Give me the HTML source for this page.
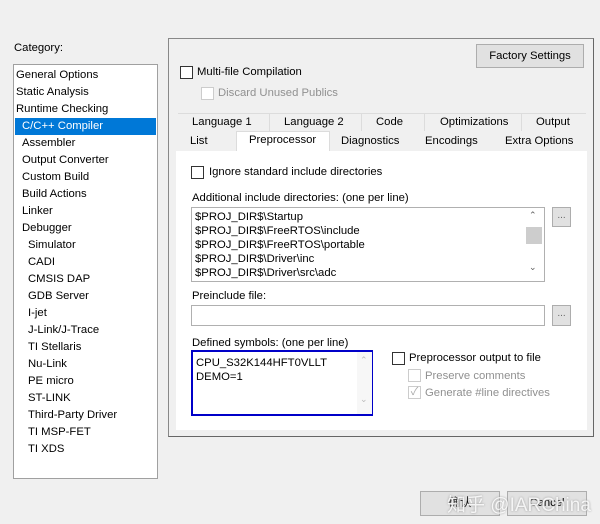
<!DOCTYPE html>
<html><head><meta charset="utf-8"><style>
*{margin:0;padding:0;box-sizing:border-box}
body{width:600px;height:524px;background:#f0f0f0;font-family:"Liberation Sans","Noto Sans CJK SC",sans-serif;font-size:11.3px;color:#000;position:relative;overflow:hidden}
.a{position:absolute;white-space:nowrap}
.cb{position:absolute;width:13px;height:13px;border:1px solid #333;background:#fff}
.cbd{border-color:#ccc}
.btn{position:absolute;background:#e1e1e1;border:1px solid #adadad;text-align:center}
.li{position:absolute;left:3px;height:17px;line-height:17px;width:139px}
</style></head><body>
<div class="a" style="left:14px;top:42px">Category:</div>
<div class="a" style="left:13px;top:64px;width:145px;height:415px;background:#fff;border:1px solid #a0a0a0">
<div class="li" style="top:2px;left:2px">General Options</div>
<div class="li" style="top:19px;left:2px">Static Analysis</div>
<div class="li" style="top:36px;left:2px">Runtime Checking</div>
<div class="li" style="top:53px;left:1px;background:#0078d7;color:#fff;padding-left:7px;width:141px">C/C++ Compiler</div>
<div class="li" style="top:70px;left:8px">Assembler</div>
<div class="li" style="top:87px;left:8px">Output Converter</div>
<div class="li" style="top:104px;left:8px">Custom Build</div>
<div class="li" style="top:121px;left:8px">Build Actions</div>
<div class="li" style="top:138px;left:8px">Linker</div>
<div class="li" style="top:155px;left:8px">Debugger</div>
<div class="li" style="top:172px;left:14px">Simulator</div>
<div class="li" style="top:189px;left:14px">CADI</div>
<div class="li" style="top:206px;left:14px">CMSIS DAP</div>
<div class="li" style="top:223px;left:14px">GDB Server</div>
<div class="li" style="top:240px;left:14px">I-jet</div>
<div class="li" style="top:257px;left:14px">J-Link/J-Trace</div>
<div class="li" style="top:274px;left:14px">TI Stellaris</div>
<div class="li" style="top:291px;left:14px">Nu-Link</div>
<div class="li" style="top:308px;left:14px">PE micro</div>
<div class="li" style="top:325px;left:14px">ST-LINK</div>
<div class="li" style="top:342px;left:14px">Third-Party Driver</div>
<div class="li" style="top:359px;left:14px">TI MSP-FET</div>
<div class="li" style="top:376px;left:14px">TI XDS</div>
</div>
<div class="a" style="left:168px;top:38px;width:426px;height:399px;border:1px solid #888;border-right-color:#666;border-bottom-color:#666"></div>
<div class="btn" style="left:476px;top:44px;width:108px;height:24px;line-height:22px">Factory Settings</div>
<div class="cb" style="left:180px;top:66px"></div>
<div class="a" style="left:197px;top:66px">Multi-file Compilation</div>
<div class="cb cbd" style="left:201px;top:87px"></div>
<div class="a" style="left:218px;top:87px;color:#909090">Discard Unused Publics</div>
<div class="a" style="left:178px;top:113px;width:408px;height:18px;border-top:1px solid #dcdcdc"></div>
<div class="a" style="left:192px;top:116px">Language 1</div>
<div class="a" style="left:284px;top:116px">Language 2</div>
<div class="a" style="left:376px;top:116px">Code</div>
<div class="a" style="left:440px;top:116px">Optimizations</div>
<div class="a" style="left:536px;top:116px">Output</div>
<div class="a" style="left:269px;top:113px;height:18px;border-left:1px solid #dcdcdc"></div>
<div class="a" style="left:361px;top:113px;height:18px;border-left:1px solid #dcdcdc"></div>
<div class="a" style="left:424px;top:113px;height:18px;border-left:1px solid #dcdcdc"></div>
<div class="a" style="left:521px;top:113px;height:18px;border-left:1px solid #dcdcdc"></div>
<div class="a" style="left:190px;top:135px">List</div>
<div class="a" style="left:236px;top:131px;width:94px;height:20px;background:#fff;border:1px solid #dcdcdc;border-bottom:none"></div>
<div class="a" style="left:249px;top:134px">Preprocessor</div>
<div class="a" style="left:341px;top:135px">Diagnostics</div>
<div class="a" style="left:425px;top:135px">Encodings</div>
<div class="a" style="left:505px;top:135px">Extra Options</div>
<div class="a" style="left:176px;top:151px;width:411px;height:279px;background:#fff"></div>
<div class="cb" style="left:191px;top:166px"></div>
<div class="a" style="left:209px;top:166px">Ignore standard include directories</div>
<div class="a" style="left:192px;top:192px">Additional include directories: (one per line)</div>
<div class="a" style="left:191px;top:207px;width:354px;height:75px;border:1px solid #b0b0b0;background:#fff;padding:2px 0 0 3px;line-height:14px">$PROJ_DIR$\Startup<br>$PROJ_DIR$\FreeRTOS\include<br>$PROJ_DIR$\FreeRTOS\portable<br>$PROJ_DIR$\Driver\inc<br>$PROJ_DIR$\Driver\src\adc</div>
<div class="a" style="left:525px;top:208px;width:17px;height:72px;background:#fff"><div style="position:absolute;left:1px;top:19px;width:16px;height:17px;background:#cdcdcd"></div><div style="position:absolute;left:4px;top:2px;font-size:9px;color:#606060">&#8963;</div><div style="position:absolute;left:4px;top:54px;font-size:9px;color:#606060">&#8964;</div></div>
<div class="btn" style="left:552px;top:207px;width:19px;height:20px;line-height:16px;font-size:10px;color:#666">...</div>
<div class="a" style="left:192px;top:290px">Preinclude file:</div>
<div class="a" style="left:191px;top:305px;width:354px;height:21px;border:1px solid #b0b0b0;background:#fff"></div>
<div class="btn" style="left:552px;top:305px;width:19px;height:21px;line-height:16px;font-size:10px;color:#666">...</div>
<div class="a" style="left:192px;top:337px">Defined symbols: (one per line)</div>
<div class="a" style="left:191px;top:350px;width:182px;height:66px;border:2px solid #0000c8;background:#fff;padding:4px 0 0 3px;line-height:14px">CPU_S32K144HFT0VLLT<br>DEMO=1</div>
<div class="a" style="left:357px;top:352px;width:15px;height:62px;background:#f7f7f7"><div style="position:absolute;left:3px;top:3px;font-size:9px;color:#bbb">&#8963;</div><div style="position:absolute;left:3px;top:42px;font-size:9px;color:#bbb">&#8964;</div></div>
<div class="cb" style="left:392px;top:352px"></div>
<div class="a" style="left:409px;top:352px">Preprocessor output to file</div>
<div class="cb cbd" style="left:408px;top:369px"></div>
<div class="a" style="left:425px;top:370px;color:#909090">Preserve comments</div>
<div class="cb cbd" style="left:408px;top:386px;font-size:11px;line-height:11px;color:#aaa;text-align:center">&#10003;</div>
<div class="a" style="left:425px;top:387px;color:#909090">Generate #line directives</div>
<div class="btn" style="left:420px;top:491px;width:80px;height:25px;line-height:23px">确认</div>
<div class="btn" style="left:507px;top:491px;width:80px;height:25px;line-height:23px">Cancel</div>
<div class="a" style="left:447px;top:490px;font-size:19px;color:rgba(255,255,255,0.85);text-shadow:0 0 2px #999">知乎 @IARChina</div>
</body></html>
